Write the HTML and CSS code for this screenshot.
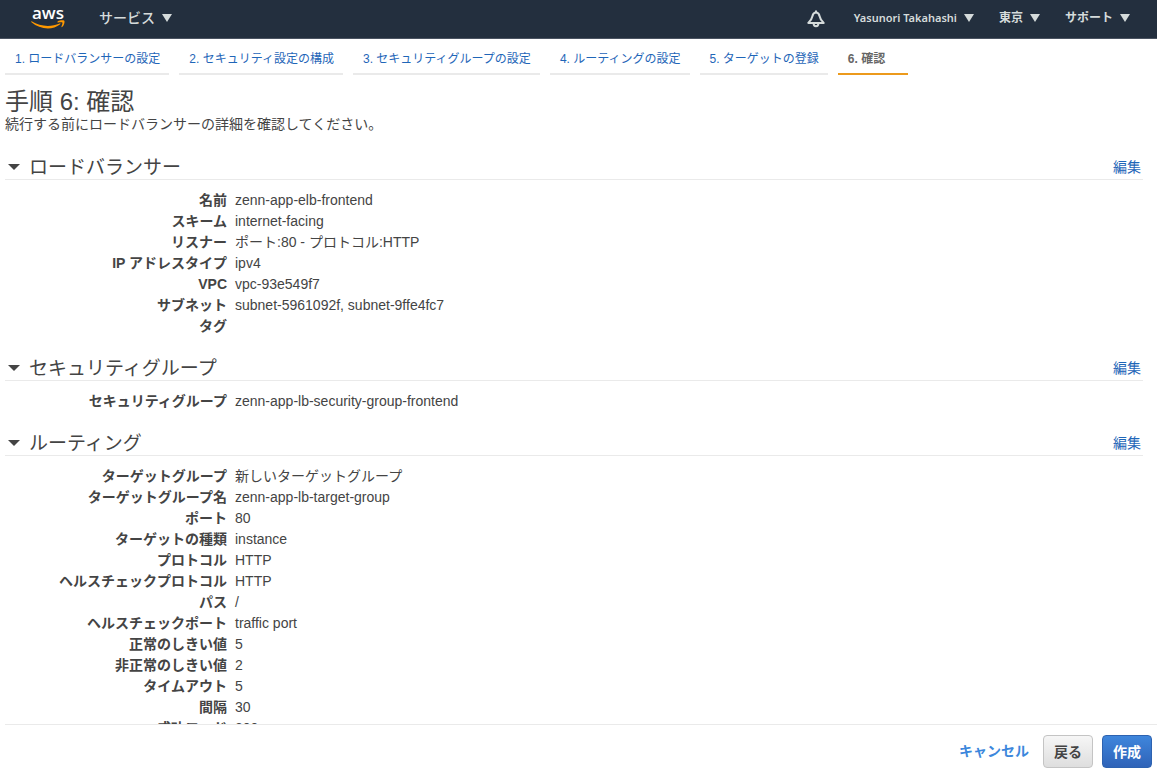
FILE: index.html
```html
<!DOCTYPE html>
<html lang="ja">
<head>
  <meta charset="UTF-8">
  <meta name="viewport" content="width=device-width, initial-scale=1.0">
  <title>手順 6: 確認</title>
  <link rel="stylesheet" href="styles.css">
</head>
<body>
  <header class="navbar">
    <a class="logo" href="#" aria-label="aws">
      <span class="logo-text">aws</span>
      <svg class="logo-smile" width="34" height="9" viewBox="0 0 34 9">
        <path d="M.6 1.3C5.5 4.600 11 5.900 16.800 5.900c4 0 8.200-.9 11.900-2.500.6-.2 1 .4.5.9C25.900 7.100 21.100 8.500 16.900 8.500 11 8.500 5.200 6.300.5 2.300.1 1.800.2 1 .6 1.300z" fill="#f90"/>
        <path d="M26.600 1.400C28.300.3 32.500 0 33.300.7c.7.8-.2 4.900-2.300 6.400-.4.300-.8.100-.6-.4.500-1.200 1.400-3.500 1-4.100-.4-.5-2.900-.3-4.300-.1-.7.100-.9-.5-.5-1.100z" fill="#f90"/>
      </svg>
    </a>
    <button class="nav-item services" type="button">サービス<span class="caret"></span></button>
    <div class="nav-right">
      <button class="bell" type="button" aria-label="通知">
        <svg width="18" height="18" viewBox="0 0 18 18" fill="none" stroke="#d5dbdb" stroke-width="2" stroke-linejoin="round" stroke-linecap="round">
          <path d="M9 1.300V2.500M9 2.500C7 2.500 5.800 4.200 5.400 6.200 4.900 9 3.800 10.500 1.300 12.900H16.700C14.200 10.500 13.100 9 12.600 6.200 12.200 4.200 11 2.500 9 2.500z"/>
          <path d="M6.600 13.200c0 1.900 1 3.100 2.400 3.100s2.400-1.200 2.400-3.100"/>
        </svg>
      </button>
      <button class="nav-item account" type="button">Yasunori Takahashi<span class="caret"></span></button>
      <button class="nav-item" type="button">東京<span class="caret"></span></button>
      <button class="nav-item" type="button">サポート<span class="caret"></span></button>
    </div>
  </header>

  <nav class="steps">
    <a href="#">1. ロードバランサーの設定</a>
    <a href="#">2. セキュリティ設定の構成</a>
    <a href="#">3. セキュリティグループの設定</a>
    <a href="#">4. ルーティングの設定</a>
    <a href="#">5. ターゲットの登録</a>
    <a class="active" href="#" aria-current="step">6. 確認</a>
  </nav>

  <main class="content">
    <h1>手順 6: 確認</h1>
    <p class="lead">続行する前にロードバランサーの詳細を確認してください。</p>

    <section>
      <div class="section-head">
        <h2>ロードバランサー</h2>
        <a href="#">編集</a>
      </div>
      <dl>
        <dt>名前</dt><dd>zenn-app-elb-frontend</dd>
        <dt>スキーム</dt><dd>internet-facing</dd>
        <dt>リスナー</dt><dd>ポート:80 - プロトコル:HTTP</dd>
        <dt>IP アドレスタイプ</dt><dd>ipv4</dd>
        <dt>VPC</dt><dd>vpc-93e549f7</dd>
        <dt>サブネット</dt><dd>subnet-5961092f, subnet-9ffe4fc7</dd>
        <dt>タグ</dt><dd></dd>
      </dl>
    </section>

    <section>
      <div class="section-head">
        <h2>セキュリティグループ</h2>
        <a href="#">編集</a>
      </div>
      <dl>
        <dt>セキュリティグループ</dt><dd>zenn-app-lb-security-group-frontend</dd>
      </dl>
    </section>

    <section>
      <div class="section-head">
        <h2>ルーティング</h2>
        <a href="#">編集</a>
      </div>
      <dl>
        <dt>ターゲットグループ</dt><dd>新しいターゲットグループ</dd>
        <dt>ターゲットグループ名</dt><dd>zenn-app-lb-target-group</dd>
        <dt>ポート</dt><dd>80</dd>
        <dt>ターゲットの種類</dt><dd>instance</dd>
        <dt>プロトコル</dt><dd>HTTP</dd>
        <dt>ヘルスチェックプロトコル</dt><dd>HTTP</dd>
        <dt>パス</dt><dd>/</dd>
        <dt>ヘルスチェックポート</dt><dd>traffic port</dd>
        <dt>正常のしきい値</dt><dd>5</dd>
        <dt>非正常のしきい値</dt><dd>2</dd>
        <dt>タイムアウト</dt><dd>5</dd>
        <dt>間隔</dt><dd>30</dd>
        <dt>成功コード</dt><dd>200</dd>
      </dl>
    </section>
  </main>

  <footer class="actions">
    <a class="cancel" href="#">キャンセル</a>
    <button class="btn" type="button">戻る</button>
    <button class="btn primary" type="button">作成</button>
  </footer>
</body>
</html>
```
FILE: styles.css
```css
* {
  box-sizing: border-box;
}
body {
  margin: 0;
  height: 100vh;
  display: flex;
  flex-direction: column;
  font-family: "Liberation Sans", "Noto Sans CJK JP", sans-serif;
  font-size: 14px;
  line-height: 21px;
  color: #444;
  background: #fff;
}
a {
  color: #1f66b8;
  text-decoration: none;
}
button {
  font-family: inherit;
  cursor: pointer;
}

/* navbar */
.navbar {
  display: flex;
  align-items: center;
  flex: none;
  height: 39px;
  padding: 0 27px 3px 31px;
  background: #232f3e;
  border-bottom: 1px solid #4a5361;
}
.logo {
  display: flex;
  flex-direction: column;
  align-items: center;
  width: 34px;
}
.logo-text {
  font-family: "Open Sans", sans-serif;
  font-size: 17px;
  font-weight: 600;
  line-height: 11px;
  padding-bottom: 2px;
  color: #fff;
}
.logo-smile {
  display: block;
}
.nav-item {
  display: flex;
  align-items: center;
  gap: 7px;
  padding: 0;
  border: 0;
  background: none;
  font-family: "Noto Sans", "Noto Sans CJK JP", sans-serif;
  font-size: 12px;
  font-weight: 600;
  line-height: 20px;
  color: #d5dbdb;
}
.services {
  margin-left: 34px;
  font-size: 14px;
  font-weight: 500;
}
.account {
  font-size: 11px;
}
.caret {
  border: 5px solid transparent;
  border-top: 8px solid #d5dbdb;
  border-bottom: 0;
}
.nav-right {
  display: flex;
  align-items: center;
  gap: 25px;
  margin-left: auto;
}
.bell {
  display: flex;
  padding: 2px 0 0;
  margin-right: 4px;
  border: 0;
  background: none;
}

/* wizard steps */
.steps {
  display: flex;
  flex: none;
  gap: 10px;
  padding: 0 5px;
}
.steps a {
  height: 36px;
  padding: 10px 9px 0 10px;
  border-bottom: 2px solid #eaeaea;
  font-size: 12px;
}
.steps .active {
  padding-right: 23px;
  border-color: #ec9a1c;
  font-weight: bold;
  color: #666;
}

/* review */
.content {
  flex: 1;
  min-height: 0;
  overflow: hidden;
  margin-left: 5px;
  padding: 14px 14px 0 0;
  border-bottom: 1px solid #eaeaea;
}
h1 {
  margin: 0;
  font-size: 24px;
  font-weight: normal;
  line-height: 25px;
}
.lead {
  margin: 0 0 20px;
}
section {
  margin-bottom: 19px;
}
.section-head {
  display: flex;
  align-items: center;
  height: 25px;
  padding-right: 2px;
  border-bottom: 1px solid #eaeaea;
}
.section-head::before {
  content: "";
  margin: 0 9px 0 3px;
  border: 6px solid transparent;
  border-top-color: #444;
  border-bottom: 0;
}
h2 {
  flex: 1;
  margin: 0;
  padding-top: 2px;
  font-size: 19px;
  font-weight: normal;
  line-height: 24px;
}
dl {
  display: grid;
  grid-template-columns: 222px 1fr;
  column-gap: 8px;
  grid-auto-rows: 21px;
  margin: 10px 0 0;
}
dt {
  text-align: right;
  font-weight: bold;
}
dd {
  margin: 0;
}

/* footer */
.actions {
  display: flex;
  flex: none;
  align-items: center;
  justify-content: flex-end;
  gap: 9px;
  padding: 10px 5px;
}
.cancel {
  margin-right: 5px;
  font-weight: bold;
  color: #3c87dc;
}
.btn {
  height: 33px;
  padding: 0 10px 2px;
  border: 1px solid #c4c4c4;
  border-radius: 4px;
  background: linear-gradient(#f6f6f6, #dedede);
  font-size: 14px;
  font-weight: bold;
  color: #444;
}
.btn.primary {
  border-color: #2d62b0;
  background: linear-gradient(#3f86dc, #2f63b8);
  color: #fff;
}
```
